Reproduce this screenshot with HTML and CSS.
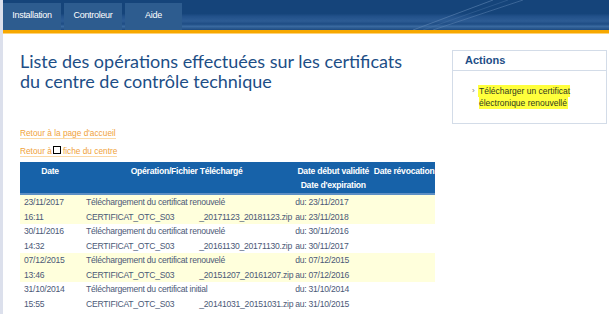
FILE: index.html
```html
<!DOCTYPE html>
<html lang="fr">
    <head>
        <meta charset="UTF-8">
        <title>Opérations sur les certificats</title>
        <link rel="stylesheet" href="styles.css">
    </head>
    <body>
        <header class="topbar">
            <nav class="tabs">
                <a href="#" class="tab">Installation</a>
                <a href="#" class="tab">Controleur</a>
                <a href="#" class="tab">Aide</a>
            </nav>
            <svg class="swoosh" width="140" height="30" viewBox="0 0 140 30">
                <path d="M0 30 L80 0" stroke="#5f86b4" stroke-width="1" opacity=".6"/>
                <path d="M20 30 L110 0" stroke="#5f86b4" stroke-width="1" opacity=".5"/>
                <path d="M10 30 L95 0" stroke="#4d77a8" stroke-width="1" opacity=".4"/>
            </svg>
        </header>
        <div class="content">
            <main class="main">
                <h1>Liste des opérations effectuées sur les certificats<br>du centre de contrôle technique</h1>
                <p class="back"><a href="#">Retour à la page d'accueil</a></p>
                <p class="back"><a href="#">Retour à la fiche du centre</a><span class="cursor-box"></span></p>
                <table class="ops">
                    <thead>
                        <tr>
                            <th class="c-date">Date</th>
                            <th class="c-op">Opération/Fichier Téléchargé</th>
                            <th class="c-valid">Date début validité<br>Date d'expiration</th>
                            <th class="c-revoc">Date révocation</th>
                        </tr>
                    </thead>
                    <tbody>
                        <tr class="odd">
                            <td>23/11/2017<br>16:11</td>
                            <td>Téléchargement du certificat renouvelé<br>CERTIFICAT_OTC_S03<span class="hidden-part"></span>_20171123_20181123.zip</td>
                            <td>du: 23/11/2017<br>au: 23/11/2018</td>
                            <td></td>
                        </tr>
                        <tr>
                            <td>30/11/2016<br>14:32</td>
                            <td>Téléchargement du certificat renouvelé<br>CERTIFICAT_OTC_S03<span class="hidden-part"></span>_20161130_20171130.zip</td>
                            <td>du: 30/11/2016<br>au: 30/11/2017</td>
                            <td></td>
                        </tr>
                        <tr class="odd">
                            <td>07/12/2015<br>13:46</td>
                            <td>Téléchargement du certificat renouvelé<br>CERTIFICAT_OTC_S03<span class="hidden-part"></span>_20151207_20161207.zip</td>
                            <td>du: 07/12/2015<br>au: 07/12/2016</td>
                            <td></td>
                        </tr>
                        <tr>
                            <td>31/10/2014<br>15:55</td>
                            <td>Téléchargement du certificat initial<br>CERTIFICAT_OTC_S03<span class="hidden-part"></span>_20141031_20151031.zip</td>
                            <td>du: 31/10/2014<br>au: 31/10/2015</td>
                            <td></td>
                        </tr>
                    </tbody>
                </table>
            </main>
            <aside class="actions">
                <h2>Actions</h2>
                <ul class="action-list">
                    <li><a href="#">Télécharger un certificat<br>électronique renouvellé</a></li>
                </ul>
            </aside>
        </div>
    </body>
</html>
```

FILE: styles.css
```css
body{
    margin: 0;
    padding: 0;
    font-family: "Liberation Sans", Arial, sans-serif;
    background-color: #FFF;
    border-left: 3px solid #DCE0EC;
    min-height: 314px;
    box-sizing: border-box;
    overflow: hidden;
}
.topbar{
    position: relative;
    height: 30px;
    background: linear-gradient(180deg, #15447A 0%, #15447A 45%, #22518A 55%, #2D5C94 70%, #1E4C84 80%, #3A6AA0 88%, #1D4A80 100%);
    border-bottom: 3px solid #F7A800;
    box-shadow: 0 1px 0 #FDD37A;
}
.tabs{
    display: flex;
    gap: 3px;
    padding-top: 3px;
    height: 27px;
}
.tab{
    display: flex;
    align-items: center;
    justify-content: center;
    padding-bottom: 3px;
    box-sizing: border-box;
    width: 58px;
    color: #FFF;
    background-color: #2D5C8F;
    font-size: 9px;
    letter-spacing: -.3px;
    text-decoration: none;
}
.tab:last-child{
    width: 57px;
}
.swoosh{
    position: absolute;
    left: 410px;
    top: 0;
}
.content{
    display: flex;
    align-items: flex-start;
}
.main{
    flex: 0 0 432px;
    padding-left: 17px;
}
h1{
    font-family: Lato, "Open Sans", sans-serif;
    font-weight: normal;
    color: #1D4E86;
    font-size: 18px;
    line-height: 20px;
    margin: 18px 0 0;
}
.back{
    margin: 0;
    font-size: 8.3px;
    position: relative;
}
.back:first-of-type{
    margin-top: 37px;
}
.back + .back{
    margin-top: 8px;
}
.back a{
    color: #F0A23A;
    text-decoration: none;
    border-bottom: 1px solid #FBD9A8;
}
.cursor-box{
    position: absolute;
    left: 33px;
    top: 0;
    width: 6px;
    height: 6px;
    border: 1px solid #000;
    background-color: #FFF;
}
.ops{
    margin-top: 6px;
    width: 415px;
    border-collapse: collapse;
    font-size: 8.6px;
    letter-spacing: -.25px;
}
.ops th{
    background-color: #1762A9;
    color: #FFF;
    font-weight: bold;
    vertical-align: top;
    padding: 3px 0 1px;
    line-height: 13.5px;
    border-bottom: 2px solid #5D8FC4;
}
.ops td{
    color: #4B5977;
    vertical-align: top;
    line-height: 14.5px;
    padding: 0 0 0 4px;
    white-space: nowrap;
}
.ops td:nth-child(2){
    padding-left: 6px;
}
.ops td:nth-child(3){
    padding-left: 2px;
}
.ops .odd td{
    background-color: #FFFFDC;
}
.c-date{
    width: 60px;
}
.c-op{
    width: 210px;
}
.c-valid{
    width: 80px;
}
.hidden-part{
    display: inline-block;
    width: 25px;
}
.actions{
    margin: 17px 0 0;
    width: 155px;
    height: 74px;
    border: 1px solid #D3DCE8;
    box-sizing: border-box;
    flex: 0 0 155px;
}
.actions h2{
    margin: 0;
    padding: 3px 0 0 12px;
    height: 16px;
    font-size: 11px;
    color: #1D4E86;
    border-bottom: 1px solid #D3DCE8;
}
.action-list{
    list-style: none;
    margin: 0;
    padding: 14px 0 0 26px;
    font-size: 8.5px;
    line-height: 12px;
}
.action-list li{
    position: relative;
}
.action-list li::before{
    content: "\203A";
    position: absolute;
    left: -7px;
    top: 0;
    color: #777;
    font-size: 8px;
}
.action-list a{
    color: #2F3A1E;
    text-decoration: none;
    background-color: #FFFF3C;
    box-shadow: 0 0 0 1px #FFFF3C;
}
```
